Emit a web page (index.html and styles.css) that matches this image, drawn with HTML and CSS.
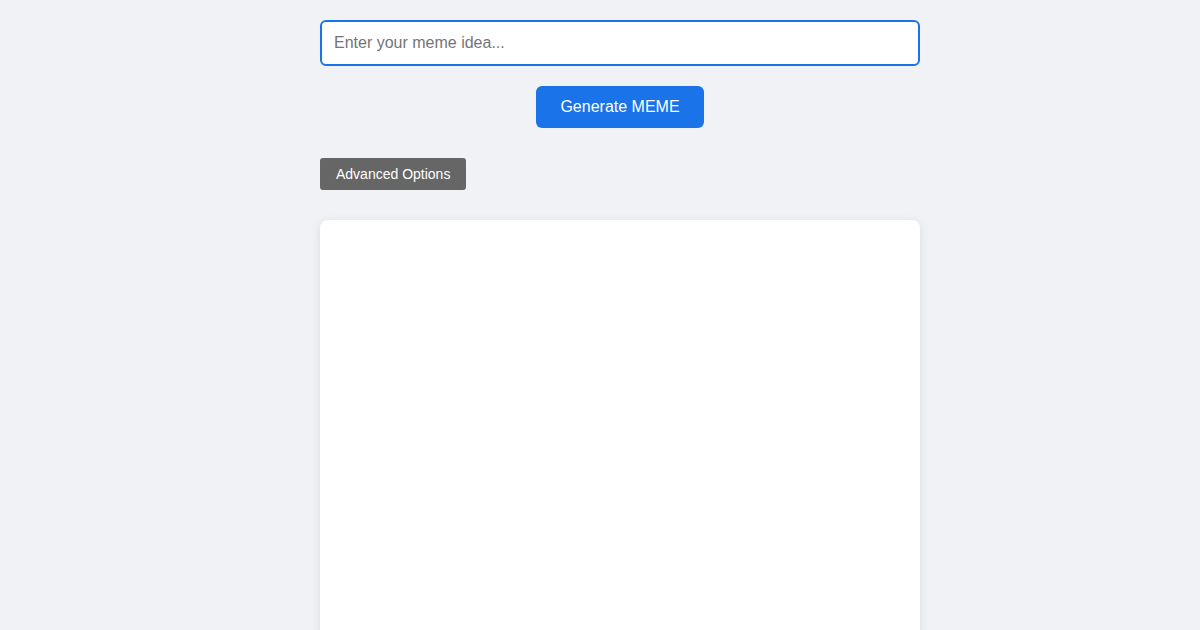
FILE: index.html
```html
<!DOCTYPE html>
<html lang="en">
<head>
<meta charset="utf-8">
<title>Meme Generator</title>
<link rel="stylesheet" href="styles.css">
</head>
<body>
<main class="container">
  <input class="idea-input" type="text" placeholder="Enter your meme idea...">
  <div class="actions">
    <button class="generate-btn" type="button">Generate MEME</button>
  </div>
  <div class="advanced">
    <button class="advanced-btn" type="button">Advanced Options</button>
  </div>
  <section class="meme-card"></section>
</main>
</body>
</html>
```
FILE: styles.css
```css
* { box-sizing: border-box; }
html, body { margin: 0; padding: 0; }
body {
  background: #f0f2f5;
  font-family: "Liberation Sans", Arial, sans-serif;
  padding: 20px 0 20px 40px;
}
.container {
  max-width: 600px;
  margin: 0 auto;
  display: flex;
  flex-direction: column;
}
.idea-input {
  width: 100%;
  height: 46px;
  padding: 0 12px;
  font-family: "Liberation Sans", Arial, sans-serif;
  font-size: 16px;
  color: #333;
  border: 2px solid #1a73e8;
  border-radius: 6px;
  background: #fff;
  outline: none;
}
.idea-input::placeholder { color: #757575; }
.actions {
  display: flex;
  justify-content: center;
  margin-top: 20px;
}
.generate-btn {
  height: 42px;
  padding: 0 24px;
  background: #1a73e8;
  color: #fff;
  border: none;
  border-radius: 6px;
  font-family: "Liberation Sans", Arial, sans-serif;
  font-size: 16px;
  cursor: pointer;
}
.advanced {
  display: flex;
  margin-top: 30px;
}
.advanced-btn {
  height: 32px;
  padding: 0 16px;
  background: #666;
  color: #fff;
  border: none;
  border-radius: 3px;
  font-family: "Liberation Sans", Arial, sans-serif;
  font-size: 14px;
  cursor: pointer;
}
.meme-card {
  margin-top: 30px;
  height: 600px;
  background: #fff;
  border-radius: 8px;
  box-shadow: 0 2px 10px rgba(0, 0, 0, 0.1);
}
```
